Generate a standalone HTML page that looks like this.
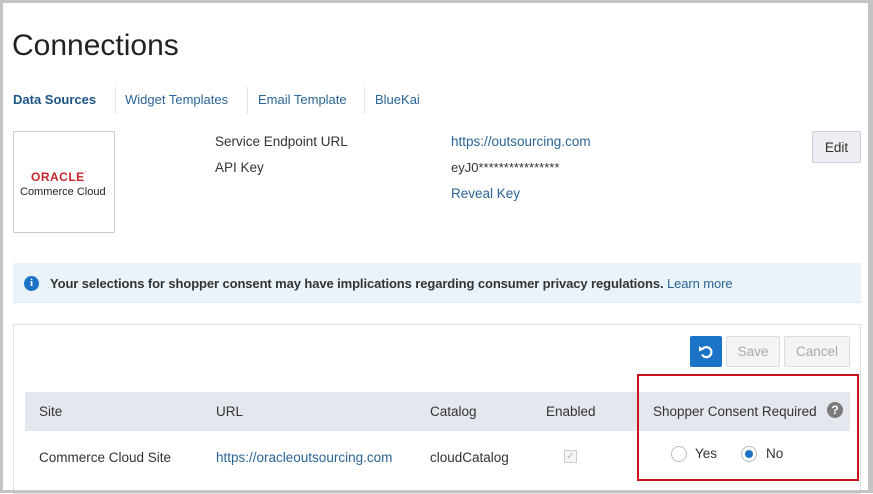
<!DOCTYPE html>
<html><head><style>
*{margin:0;padding:0;box-sizing:border-box}
body{width:873px;height:493px;overflow:hidden;background:#fff;font-family:"Liberation Sans",sans-serif;font-size:13px;color:#333;position:relative}
.a{position:absolute;white-space:nowrap}
.frame{position:absolute;left:0;top:0;width:873px;height:493px;border:3px solid #c4c4c4;border-right-width:5px;pointer-events:none}
.link{color:#2a6496}
.tab{top:92px;color:#2a6496;font-size:13.5px}
.sep{position:absolute;top:87px;width:1px;height:27px;background:#e2e2e2}
.btn{position:absolute;border:1px solid #ddd;background:#f3f4f6;color:#aaa;font-size:13.5px;text-align:center;border-radius:2px}
</style></head><body>
<div class="a" style="left:12px;top:29px;font-size:30px;color:#222">Connections</div>
<div class="a tab" style="left:13px;font-weight:bold;color:#1d5486;font-size:13px">Data Sources</div>
<div class="sep" style="left:115px"></div>
<div class="a tab" style="left:125px;font-size:13px">Widget Templates</div>
<div class="sep" style="left:247px"></div>
<div class="a tab" style="left:258px;font-size:13px">Email Template</div>
<div class="sep" style="left:364px"></div>
<div class="a tab" style="left:375px;top:92px;font-size:13px">BlueKai</div>

<div style="position:absolute;left:13px;top:131px;width:102px;height:102px;border:1px solid #ccc"></div>
<div class="a" style="left:31px;top:170px;color:#c5262c;font-size:12px;font-weight:bold;letter-spacing:0.5px">ORACLE<span style="font-size:5px;vertical-align:top">·</span></div>
<div class="a" style="left:20px;top:186px;font-size:11px;color:#222">Commerce Cloud</div>

<div class="a" style="left:215px;top:134px;font-size:13.5px">Service Endpoint URL</div>
<div class="a" style="left:215px;top:160px;font-size:13.5px">API Key</div>
<div class="a link" style="left:451px;top:134px;font-size:13.5px">https://outsourcing.com</div>
<div class="a" style="left:451px;top:160px;font-size:13px">eyJ0****************</div>
<div class="a link" style="left:451px;top:186px;font-size:13.5px">Reveal Key</div>
<div class="btn" style="left:812px;top:131px;width:49px;height:32px;line-height:32px;color:#333;background:#eceef2;border-color:#ccd">Edit</div>

<div style="position:absolute;left:13px;top:263px;width:848px;height:40px;background:#eaf3f9;border-bottom:1px solid #dde8ef"></div>
<div style="position:absolute;left:24px;top:276px;width:15px;height:15px;border-radius:50%;background:#1a73c6;color:#fff;font-size:11px;font-weight:bold;text-align:center;line-height:15px;font-family:'Liberation Serif',serif">i</div>
<div class="a" style="left:50px;top:276px;font-size:13px;font-weight:bold;color:#333;letter-spacing:-0.1px">Your selections for shopper consent may have implications regarding consumer privacy regulations. <span class="link" style="font-weight:normal">Learn more</span></div>

<div style="position:absolute;left:13px;top:324px;width:848px;height:170px;border:1px solid #e0e0e0"></div>
<div style="position:absolute;left:690px;top:336px;width:32px;height:31px;background:#1a73c6;border-radius:2px"><svg width="32" height="31" viewBox="0 0 32 31"><path d="M12.5 13 A5 5 0 1 1 12 18.5" fill="none" stroke="#fff" stroke-width="2.2"/><path d="M9 10 L13.5 13.5 L9 15.5Z" fill="#fff"/></svg></div>
<div class="btn" style="left:726px;top:336px;width:54px;height:31px;line-height:30px">Save</div>
<div class="btn" style="left:784px;top:336px;width:66px;height:31px;line-height:30px">Cancel</div>

<div style="position:absolute;left:25px;top:392px;width:825px;height:39px;background:#e4e8ee"></div>
<div class="a" style="left:39px;top:404px;font-size:13.5px">Site</div>
<div class="a" style="left:216px;top:404px;font-size:13.5px">URL</div>
<div class="a" style="left:430px;top:404px;font-size:13.5px">Catalog</div>
<div class="a" style="left:546px;top:404px;font-size:13.5px">Enabled</div>
<div class="a" style="left:653px;top:404px;font-size:13.5px">Shopper Consent Required</div>
<div style="position:absolute;left:827px;top:402px;width:16px;height:16px;border-radius:50%;background:#7b7b7b;color:#fff;font-size:12px;font-weight:bold;text-align:center;line-height:16px">?</div>

<div class="a" style="left:39px;top:450px;font-size:13.5px">Commerce Cloud Site</div>
<div class="a link" style="left:216px;top:450px;font-size:13.5px">https://oracleoutsourcing.com</div>
<div class="a" style="left:430px;top:450px;font-size:13.5px">cloudCatalog</div>
<div style="position:absolute;left:564px;top:450px;width:13px;height:13px;border:1px solid #ccc;background:#f4f4f4;color:#bbb;font-size:10px;line-height:11px;text-align:center">✓</div>
<div style="position:absolute;left:671px;top:446px;width:16px;height:16px;border-radius:50%;border:1px solid #bbb"></div>
<div class="a" style="left:695px;top:446px;font-size:13.5px">Yes</div>
<div style="position:absolute;left:741px;top:446px;width:16px;height:16px;border-radius:50%;border:1px solid #bbb;background:#fff"><div style="position:absolute;left:3px;top:3px;width:8px;height:8px;border-radius:50%;background:#1a73c6"></div></div>
<div class="a" style="left:766px;top:446px;font-size:13.5px">No</div>

<div style="position:absolute;left:637px;top:374px;width:222px;height:107px;border:2px solid #c8141c"></div>
<div class="frame"></div>
</body></html>
